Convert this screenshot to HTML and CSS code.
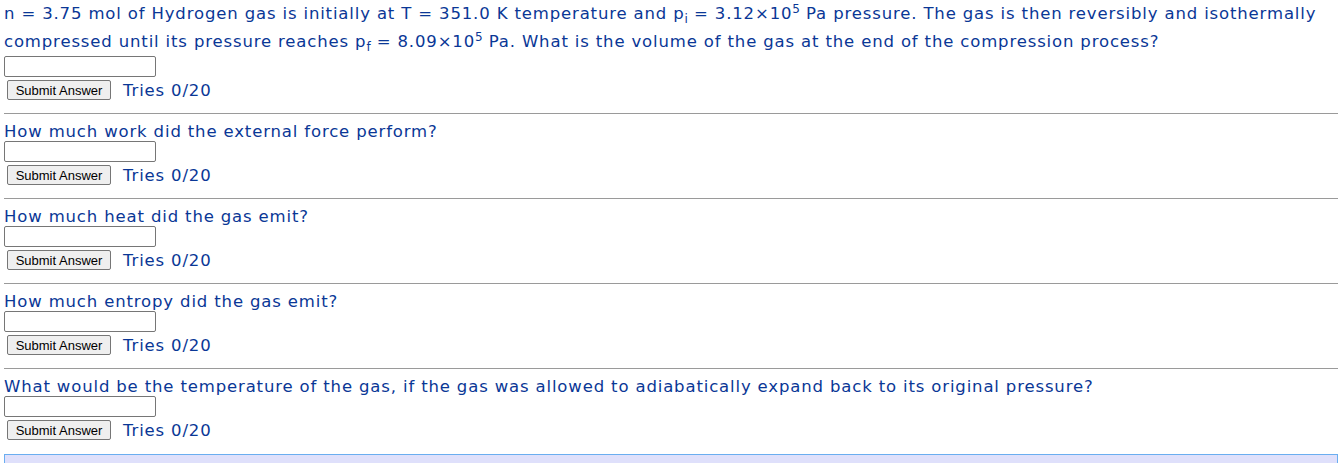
FILE: index.html
```html
<!DOCTYPE html>
<html>
<head>
<meta charset="utf-8">
<link rel="stylesheet" href="styles.css">
</head>
<body>
<div class="part">
  <div class="intro"><span>n = 3.75 mol of Hydrogen gas is initially at T = 351.0 K temperature and p</span><sub>i</sub><span> = 3.12×10</span><sup>5</sup><span> Pa pressure. The gas is then reversibly and isothermally</span><br><span>compressed until its pressure reaches p</span><sub>f</sub><span> = 8.09×10</span><sup>5</sup><span> Pa. What is the volume of the gas at the end of the compression process?</span></div>
  <input class="field" type="text">
  <div class="actions"><button class="submit">Submit Answer</button><span class="tries">Tries 0/20</span></div>
</div>
<hr class="sep">
<div class="part">
  <div class="question">How much work did the external force perform?</div>
  <input class="field" type="text">
  <div class="actions"><button class="submit">Submit Answer</button><span class="tries">Tries 0/20</span></div>
</div>
<hr class="sep">
<div class="part">
  <div class="question">How much heat did the gas emit?</div>
  <input class="field" type="text">
  <div class="actions"><button class="submit">Submit Answer</button><span class="tries">Tries 0/20</span></div>
</div>
<hr class="sep">
<div class="part">
  <div class="question">How much entropy did the gas emit?</div>
  <input class="field" type="text">
  <div class="actions"><button class="submit">Submit Answer</button><span class="tries">Tries 0/20</span></div>
</div>
<hr class="sep">
<div class="part">
  <div class="question">What would be the temperature of the gas, if the gas was allowed to adiabatically expand back to its original pressure?</div>
  <input class="field" type="text">
  <div class="actions"><button class="submit">Submit Answer</button><span class="tries">Tries 0/20</span></div>
</div>
<div class="panel"></div>
</body>
</html>
```
FILE: styles.css
```css
html, body {
  margin: 0;
  background: #ffffff;
}
body {
  padding: 0 4px;
  font-family: Verdana, "DejaVu Sans", sans-serif;
  font-size: 16.5px;
  letter-spacing: 0.85px;
  color: #0a3796;
  overflow: hidden;
}
.intro {
  line-height: 28px;
  white-space: nowrap;
}
.intro sub, .intro sup {
  font-size: 12px;
  line-height: 0;
  letter-spacing: 0;
}
.question {
  padding-top: 2px;
  line-height: 18px;
}
.field {
  display: block;
  box-sizing: border-box;
  width: 152px;
  height: 21px;
  margin: 0;
  padding: 0 2px;
  border: 1px solid #767676;
  border-radius: 2px;
  background: #fff;
}
.actions {
  display: flex;
  align-items: flex-start;
  height: 20px;
  margin-top: 3px;
  padding-left: 3px;
}
.submit {
  box-sizing: border-box;
  width: 104px;
  height: 20px;
  padding: 0;
  font-family: "Liberation Sans", Arial, sans-serif;
  font-size: 13px;
  letter-spacing: 0;
  color: #000;
  background: #efefef;
  border: 1px solid #767676;
  border-radius: 2px;
}
.tries {
  margin-left: 12px;
  padding-top: 1px;
  line-height: 20px;
}
.sep {
  margin: 13px 0 7px 0;
  height: 0;
  border: 0;
  border-top: 1px solid #9a9a9a;
}
.panel {
  margin-top: 14px;
  height: 40px;
  background: #dfe0fb;
  border: 1px solid #6aaef0;
}
```
